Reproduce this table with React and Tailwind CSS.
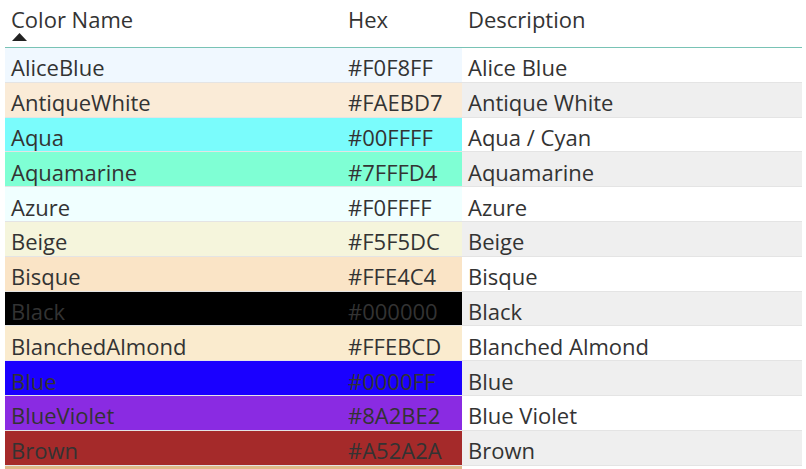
import React from "react";

const colors = [
  ["AliceBlue", "#F0F8FF", "Alice Blue", "#F0F8FF"],
  ["AntiqueWhite", "#FAEBD7", "Antique White", "#FAEBD7"],
  ["Aqua", "#00FFFF", "Aqua / Cyan", "#7AFCFC"],
  ["Aquamarine", "#7FFFD4", "Aquamarine", "#7FFFD4"],
  ["Azure", "#F0FFFF", "Azure", "#F0FFFF"],
  ["Beige", "#F5F5DC", "Beige", "#F5F5DC"],
  ["Bisque", "#FFE4C4", "Bisque", "#FAE4C6"],
  ["Black", "#000000", "Black", "#000000"],
  ["BlanchedAlmond", "#FFEBCD", "Blanched Almond", "#FAEBCE"],
  ["Blue", "#0000FF", "Blue", "#1A00FF"],
  ["BlueViolet", "#8A2BE2", "Blue Violet", "#8A2BE2"],
  ["Brown", "#A52A2A", "Brown", "#A52A2A"],
];

export default function App() {
  return (
    <div className="w-[806px] h-[469px] overflow-hidden bg-white text-[#333] text-[22px]" style={{ fontFamily: '"Segoe UI", "Open Sans", sans-serif' }}>
      <div className="ml-[5px] w-[797px]">
        {/* header */}
        <div className="flex h-[48px] border-b border-[#79c3b5]">
          <div className="w-[337px] pl-[6px] pt-[3px] leading-[32px]">
            <div>Color Name</div>
            <svg width="15" height="8" viewBox="0 0 15 8" className="-mt-[2px] ml-[1px]"><path d="M0 8 L7.5 0 L15 8 Z" fill="#222" /></svg>
          </div>
          <div className="w-[120px] pl-[6px] pt-[3px] leading-[32px]">Hex</div>
          <div className="flex-1 pl-[6px] pt-[3px] leading-[32px]">Description</div>
        </div>
        {/* rows */}
        {colors.map(([name, hex, desc, bg], i) => (
          <div key={name} className="flex h-[34.8px] border-b border-[#e4e4e4] leading-[28px]">
            <div className="flex w-[457px] items-center pt-[5px]" style={{ backgroundColor: bg }}>
              <div className="w-[337px] pl-[6px]">{name}</div>
              <div className="flex-1 pl-[6px]">{hex}</div>
            </div>
            <div className={`flex-1 flex items-center pt-[5px] pl-[6px] ${i % 2 ? "bg-[#efefef]" : "bg-white"}`}>{desc}</div>
          </div>
        ))}
        {/* next row (BurlyWood), only its top edge is in view */}
        <div className="flex h-[34.8px]">
          <div className="w-[457px] bg-[#DEB887]" />
          <div className="flex-1 bg-white" />
        </div>
      </div>
    </div>
  );
}
